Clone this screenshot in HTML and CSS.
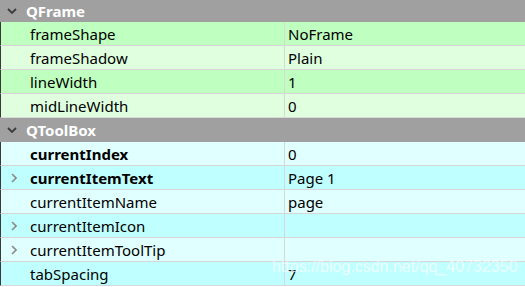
FILE: index.html
```html
<!DOCTYPE html>
<html lang="en">
<head>
    <meta charset="UTF-8">
    <meta name="viewport" content="width=device-width, initial-scale=1.0">
    <title>Property Editor</title>
    <link rel="stylesheet" href="styles.css">
</head>
<body>
    <div class="editor">
        <div class="group first">
            <svg class="caret-down" width="10" height="6" viewBox="0 0 10 6"><path d="M1 1 L5 5 L9 1" fill="none" stroke="#3c3c3c" stroke-width="1.8"/></svg>
            <span>QFrame</span>
        </div>
        <div class="row green-dark"><div class="key">frameShape</div><div class="val">NoFrame</div></div>
        <div class="row green-light"><div class="key">frameShadow</div><div class="val">Plain</div></div>
        <div class="row green-dark"><div class="key">lineWidth</div><div class="val">1</div></div>
        <div class="row green-light"><div class="key">midLineWidth</div><div class="val">0</div></div>

        <div class="group">
            <svg class="caret-down" width="10" height="6" viewBox="0 0 10 6"><path d="M1 1 L5 5 L9 1" fill="none" stroke="#3c3c3c" stroke-width="1.8"/></svg>
            <span>QToolBox</span>
        </div>
        <div class="row cyan-light"><div class="key bold">currentIndex</div><div class="val">0</div></div>
        <div class="row cyan-dark">
            <div class="key bold">
                <svg class="caret-right" width="6" height="10" viewBox="0 0 6 10"><path d="M1 1 L5 5 L1 9" fill="none" stroke="#8a8a8a" stroke-width="1.6"/></svg>
                currentItemText
            </div>
            <div class="val">Page 1</div>
        </div>
        <div class="row cyan-light"><div class="key">currentItemName</div><div class="val">page</div></div>
        <div class="row cyan-dark">
            <div class="key">
                <svg class="caret-right" width="6" height="10" viewBox="0 0 6 10"><path d="M1 1 L5 5 L1 9" fill="none" stroke="#8a8a8a" stroke-width="1.6"/></svg>
                currentItemIcon
            </div>
            <div class="val"></div>
        </div>
        <div class="row cyan-light">
            <div class="key">
                <svg class="caret-right" width="6" height="10" viewBox="0 0 6 10"><path d="M1 1 L5 5 L1 9" fill="none" stroke="#8a8a8a" stroke-width="1.6"/></svg>
                currentItemToolTip
            </div>
            <div class="val"></div>
        </div>
        <div class="row cyan-dark"><div class="key">tabSpacing</div><div class="val">7</div></div>
    </div>
    <div class="watermark">https://blog.csdn.net/qq_40732350</div>
</body>
</html>
```

FILE: styles.css
```css
body {
    margin: 0;
    font-family: "Noto Sans", "Open Sans", sans-serif;
    font-size: 15px;
    color: #000;
    background: #fff;
    overflow: hidden;
}

.editor {
    width: 525px;
}

.group {
    height: 24px;
    background-color: #a0a0a0;
    color: #fff;
    font-weight: bold;
    display: flex;
    align-items: center;
    padding-left: 7px;
}

.group.first {
    height: 22px;
}

.group span {
    margin-left: 9px;
}

.row {
    display: grid;
    grid-template-columns: 284px 1fr;
    height: 23px;
    border-bottom: 1px solid #d8d8d8;
    border-left: 1px solid #3a3a3a;
}

.key, .val {
    display: flex;
    align-items: center;
    white-space: nowrap;
}

.key {
    position: relative;
    padding-left: 29px;
    border-right: 1px solid #d8d8d8;
}

.val {
    padding-left: 3px;
}

.bold {
    font-weight: bold;
}

.caret-right {
    position: absolute;
    left: 10px;
    top: 7px;
}

.green-dark { background-color: #bfffbf; }
.green-light { background-color: #dfffdf; }
.cyan-dark { background-color: #c0ffff; }
.cyan-light { background-color: #e0ffff; }

.watermark {
    position: absolute;
    left: 272px;
    top: 258px;
    font-family: "Liberation Sans", Arial, sans-serif;
    font-size: 16px;
    color: rgba(255, 255, 255, 0.7);
}
```
